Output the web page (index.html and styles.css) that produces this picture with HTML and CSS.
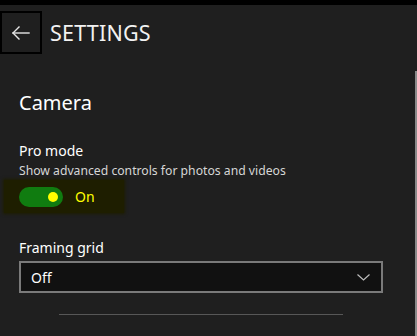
FILE: index.html
```html
<!DOCTYPE html>
<html lang="en">
<head>
<meta charset="UTF-8">
<meta name="viewport" content="width=device-width, initial-scale=1.0">
<title>Settings</title>
<link rel="stylesheet" href="styles.css">
</head>
<body>
  <div class="top-strip"></div>
  <header class="title-bar">
    <button class="back-btn" aria-label="Back">
      <svg width="18" height="14" viewBox="0 0 18 14" fill="none" stroke="#e6e6e6" stroke-width="1.4" stroke-linecap="square">
        <line x1="1" y1="7" x2="17" y2="7"></line>
        <polyline points="7,1 1,7 7,13"></polyline>
      </svg>
    </button>
    <h1>SETTINGS</h1>
  </header>

  <main class="content">
    <h2>Camera</h2>

    <section class="setting">
      <h3>Pro mode</h3>
      <p class="desc">Show advanced controls for photos and videos</p>
      <div class="toggle-row">
        <span class="toggle"><span class="knob"></span></span>
        <span class="toggle-label">On</span>
      </div>
    </section>

    <section class="setting">
      <h3>Framing grid</h3>
      <div class="select">
        <span>Off</span>
        <svg width="13" height="7" viewBox="0 0 13 7" fill="none" stroke="#bdbdbd" stroke-width="1.2">
          <polyline points="0.5,0.5 6.5,6 12.5,0.5"></polyline>
        </svg>
      </div>
    </section>

    <hr class="divider">
  </main>

  <div class="scrollbar"></div>
</body>
</html>
```

FILE: styles.css
```css
:root {
  --bg-color: #1f1f1f;
  --text-color: #ffffff;
  --sub-color: #d6d6d6;
  --accent-green: #107c10;
  --accent-yellow: #ffff00;
}

* {
  box-sizing: border-box;
}

html, body {
  margin: 0;
  height: 100%;
}

body {
  background-color: var(--bg-color);
  color: var(--text-color);
  font-family: "Noto Sans", "Open Sans", sans-serif;
  overflow: hidden;
  position: relative;
}

.top-strip {
  height: 5px;
  background-color: #000;
}

.title-bar {
  display: flex;
  align-items: center;
  margin-top: 6px;
}

.back-btn {
  width: 42px;
  height: 43px;
  border: 2px solid #000;
  background: transparent;
  padding: 0;
  display: flex;
  align-items: center;
  justify-content: center;
}

.title-bar h1 {
  margin: 0 0 0 8px;
  font-size: 21.5px;
  font-weight: 400;
  letter-spacing: 0.2px;
  color: #f2f2f2;
}

.content {
  padding: 0 0 0 19px;
}

.content h2 {
  margin: 35px 0 0;
  font-size: 20px;
  font-weight: 400;
  line-height: 28px;
}

.setting h3 {
  font-size: 14px;
  font-weight: 400;
  margin: 0;
  line-height: 19px;
}

.setting:first-of-type {
  margin-top: 24px;
}

.desc {
  margin: 2px 0 0;
  font-size: 12.2px;
  line-height: 17px;
  color: var(--sub-color);
}

.toggle-row {
  display: flex;
  align-items: center;
  width: 120px;
  height: 33px;
  margin: 1px 0 0 -15px;
  padding-left: 15px;
  background-color: #1e1e00;
  box-shadow: 0 0 3px 1px #1e1e00;
}

.toggle {
  width: 44px;
  height: 20px;
  border-radius: 10px;
  background-color: var(--accent-green);
  display: flex;
  align-items: center;
  justify-content: flex-end;
  padding-right: 5px;
}

.knob {
  width: 10px;
  height: 10px;
  border-radius: 50%;
  background-color: var(--accent-yellow);
}

.toggle-label {
  margin-left: 12px;
  font-size: 14px;
  color: var(--accent-yellow);
}

.setting + .setting {
  margin-top: 25px;
}

.select {
  width: 364px;
  height: 32px;
  margin-top: 4px;
  border: 2px solid #7a7a7a;
  background-color: #111;
  display: flex;
  align-items: center;
  justify-content: space-between;
  padding: 0 11px 0 10px;
  font-size: 14px;
}

.divider {
  width: 284px;
  margin: 21px 0 0 40px;
  border: none;
  border-top: 1px solid #575757;
}

.scrollbar {
  position: absolute;
  right: 0;
  top: 71px;
  bottom: 0;
  width: 2px;
  background-color: #8a8a8a;
}
```
